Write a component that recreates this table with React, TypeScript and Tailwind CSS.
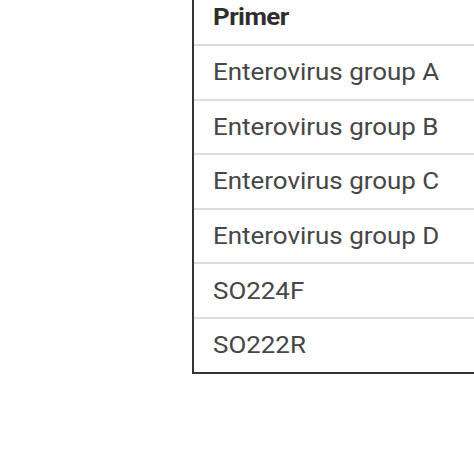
const rows = [
  "Enterovirus group A",
  "Enterovirus group B",
  "Enterovirus group C",
  "Enterovirus group D",
  "SO224F",
  "SO222R",
];

export default function App() {
  return (
    <div className="w-[474px] h-[474px] overflow-hidden bg-white" style={{ fontFamily: "Roboto, sans-serif" }}>
      <div className="-mt-[10.6px] ml-[192px] w-[300px] border-l-2 border-b-2 border-[#333333]">
        <div className="h-[54.6px] flex items-center pl-[19px] text-[24px] font-bold text-[#2e2e2e]">
          <span className="inline-block origin-left scale-x-[1.08] tracking-[-0.5px]">Primer</span>
        </div>
        {rows.map((r) => (
          <div
            key={r}
            className="h-[54.6px] flex items-center pl-[19px] text-[24px] text-[#464646] border-t-2 border-[#dddddd]"
          >
            <span className="inline-block origin-left scale-x-[1.08] whitespace-nowrap">{r}</span>
          </div>
        ))}
      </div>
    </div>
  );
}
